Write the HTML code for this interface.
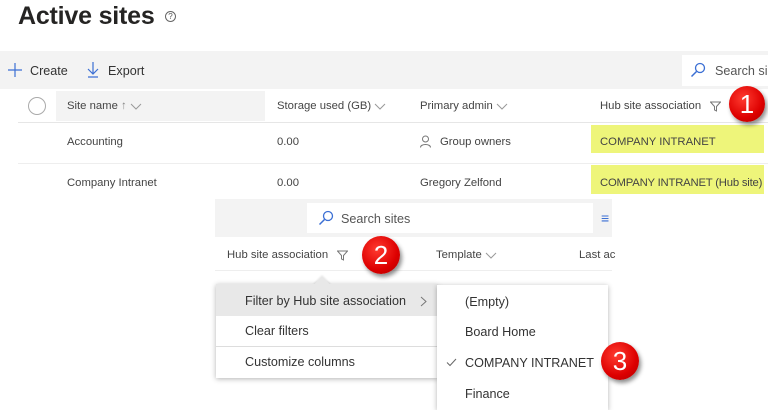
<!DOCTYPE html>
<html><head><style>
*{margin:0;padding:0;box-sizing:border-box}
body{width:768px;height:404px;overflow:hidden;background:#fff;font-family:"Liberation Sans",sans-serif;color:#323130;position:relative}
.a{position:absolute;white-space:nowrap}
.t{font-size:11.3px;color:#444}
.m{font-size:12.6px;color:#333}
.badge{position:absolute;border-radius:50%;background:radial-gradient(circle at 40% 35%,#ff3b30,#d00 60%,#a00);color:#fff;font-size:26px;text-align:center;box-shadow:2px 3px 4px rgba(0,0,0,.45);font-family:"Liberation Sans",sans-serif}
.cv{display:inline-block;vertical-align:middle;margin-left:3px}
</style></head><body>
<div class="a" style="left:18px;top:2px;font-size:25px;font-weight:bold;color:#252423;letter-spacing:-0.2px">Active sites</div>
<div class="a" style="left:165px;top:11px;width:11px;height:11px;border:1px solid #666;border-radius:50%;font-size:8px;text-align:center;line-height:9px;color:#555">?</div>

<div class="a" style="left:0;top:51px;width:768px;height:38px;background:#f3f3f3"></div>
<svg class="a" style="left:8px;top:63px" width="14" height="14"><path d="M7 0V14M0 7H14" stroke="#3b6fd4" stroke-width="1.2"/></svg>
<div class="a" style="left:30px;top:64px;font-size:12.6px;color:#333">Create</div>
<svg class="a" style="left:87px;top:62px" width="12" height="16"><path d="M6 0V12M1 7L6 12L11 7M1 15H11" stroke="#3b6fd4" stroke-width="1.2" fill="none"/></svg>
<div class="a" style="left:108px;top:64px;font-size:12.6px;color:#333">Export</div>
<div class="a" style="left:682px;top:55px;width:90px;height:31px;background:#fff"></div>
<svg class="a" style="left:690px;top:62px" width="16" height="16"><circle cx="10" cy="6" r="4.5" stroke="#3b6fd4" stroke-width="1.3" fill="none"/><path d="M6.5 9.5L1.5 14.5" stroke="#3b6fd4" stroke-width="1.5"/></svg>
<div class="a" style="left:715px;top:64px;font-size:12.6px;color:#555">Search si</div>

<div class="a" style="left:56px;top:91px;width:209px;height:30px;background:#f3f3f3"></div>
<div class="a" style="left:28px;top:97px;width:18px;height:18px;border:1px solid #aaa;border-radius:50%;background:#fff"></div>
<div class="a t" style="left:67px;top:100px">Site name <span style="color:#888">↑</span><svg class="cv" width="12" height="7"><path d="M1 1L6 6L11 1" stroke="#999" fill="none"/></svg></div>
<div class="a t" style="left:277px;top:100px">Storage used (GB)<svg class="cv" width="12" height="7"><path d="M1 1L6 6L11 1" stroke="#999" fill="none"/></svg></div>
<div class="a t" style="left:420px;top:100px">Primary admin<svg class="cv" width="12" height="7"><path d="M1 1L6 6L11 1" stroke="#999" fill="none"/></svg></div>
<div class="a t" style="left:600px;top:100px">Hub site association <svg class="cv" style="margin-left:6px" width="11" height="11"><path d="M0.5 1H10.5L6.5 5.5V10L4.5 9V5.5Z" stroke="#777" fill="none"/></svg></div>
<div class="a" style="left:18px;top:122px;width:750px;height:1px;background:#e6e6e6"></div>
<div class="a" style="left:18px;top:163px;width:750px;height:1px;background:#eee"></div>
<div class="a" style="left:591px;top:125px;width:173px;height:28px;background:#eef57a"></div>
<div class="a" style="left:591px;top:165px;width:173px;height:29px;background:#eef57a"></div>
<div class="a t" style="left:67px;top:136px">Accounting</div>
<div class="a t" style="left:277px;top:136px">0.00</div>
<svg class="a" style="left:420px;top:135px" width="11" height="13"><circle cx="5.5" cy="4" r="3" stroke="#777" fill="none"/><path d="M0.5 12.5C0.5 8.5 10.5 8.5 10.5 12.5" stroke="#777" fill="none"/></svg>
<div class="a t" style="left:440px;top:136px">Group owners</div>
<div class="a t" style="left:600px;top:136px">COMPANY INTRANET</div>
<div class="a t" style="left:67px;top:177px">Company Intranet</div>
<div class="a t" style="left:277px;top:177px">0.00</div>
<div class="a t" style="left:420px;top:177px">Gregory Zelfond</div>
<div class="a t" style="left:600px;top:177px;letter-spacing:-0.2px">COMPANY INTRANET (Hub site)</div>
<div class="badge" style="left:729px;top:86px;width:36px;height:36px;line-height:36px">1</div>

<div class="a" style="left:215px;top:199px;width:397px;height:205px;background:#fff"></div>
<div class="a" style="left:215px;top:199px;width:397px;height:38px;background:#f3f3f3"></div>
<div class="a" style="left:307px;top:203px;width:286px;height:30px;background:#fff"></div>
<svg class="a" style="left:318px;top:210px" width="16" height="16"><circle cx="10" cy="6" r="4.5" stroke="#3b6fd4" stroke-width="1.3" fill="none"/><path d="M6.5 9.5L1.5 14.5" stroke="#3b6fd4" stroke-width="1.5"/></svg>
<div class="a" style="left:341px;top:212px;font-size:12.6px;color:#555">Search sites</div>
<div class="a" style="left:601px;top:210px;font-size:14px;color:#3b6fd4">≡</div>
<div class="a t" style="left:227px;top:249px">Hub site association <svg class="cv" style="margin-left:6px" width="11" height="11"><path d="M0.5 1H10.5L6.5 5.5V10L4.5 9V5.5Z" stroke="#777" fill="none"/></svg></div>
<div class="a t" style="left:436px;top:249px">Template<svg class="cv" width="12" height="7"><path d="M1 1L6 6L11 1" stroke="#999" fill="none"/></svg></div>
<div class="a t" style="left:579px;top:249px">Last ac</div>
<div class="a" style="left:215px;top:270px;width:397px;height:1px;background:#eee"></div>
<div class="badge" style="left:362px;top:236px;width:38px;height:38px;line-height:38px">2</div>

<div class="a" style="left:216px;top:284px;width:222px;height:94px;background:#fff;box-shadow:0 1px 5px rgba(0,0,0,.3)"></div>
<div class="a" style="left:316px;top:279px;width:12px;height:12px;background:#e8e8e8;transform:rotate(45deg);box-shadow:-1px -1px 2px rgba(0,0,0,.1)"></div>
<div class="a" style="left:216px;top:284px;width:222px;height:32px;background:#e8e8e8"></div>
<div class="a" style="left:216px;top:346px;width:222px;height:1px;background:#ddd"></div>
<div class="a m" style="left:245px;top:294px">Filter by Hub site association</div>
<svg class="a" style="left:420px;top:296px" width="7" height="11"><path d="M1 1L6 5.5L1 10" stroke="#777" fill="none"/></svg>
<div class="a m" style="left:245px;top:324px">Clear filters</div>
<div class="a m" style="left:245px;top:355px">Customize columns</div>

<div class="a" style="left:437px;top:285px;width:171px;height:125px;background:#fff;box-shadow:0 1px 5px rgba(0,0,0,.3)"></div>
<div class="a m" style="left:465px;top:295px">(Empty)</div>
<div class="a m" style="left:465px;top:325px">Board Home</div>
<svg class="a" style="left:446px;top:358px" width="11" height="9"><path d="M1 4.5L4 7.5L10 1" stroke="#666" fill="none"/></svg>
<div class="a m" style="left:465px;top:356px">COMPANY INTRANET</div>
<div class="a m" style="left:465px;top:387px">Finance</div>
<div class="badge" style="left:601px;top:342px;width:38px;height:38px;line-height:38px">3</div>
</body></html>
